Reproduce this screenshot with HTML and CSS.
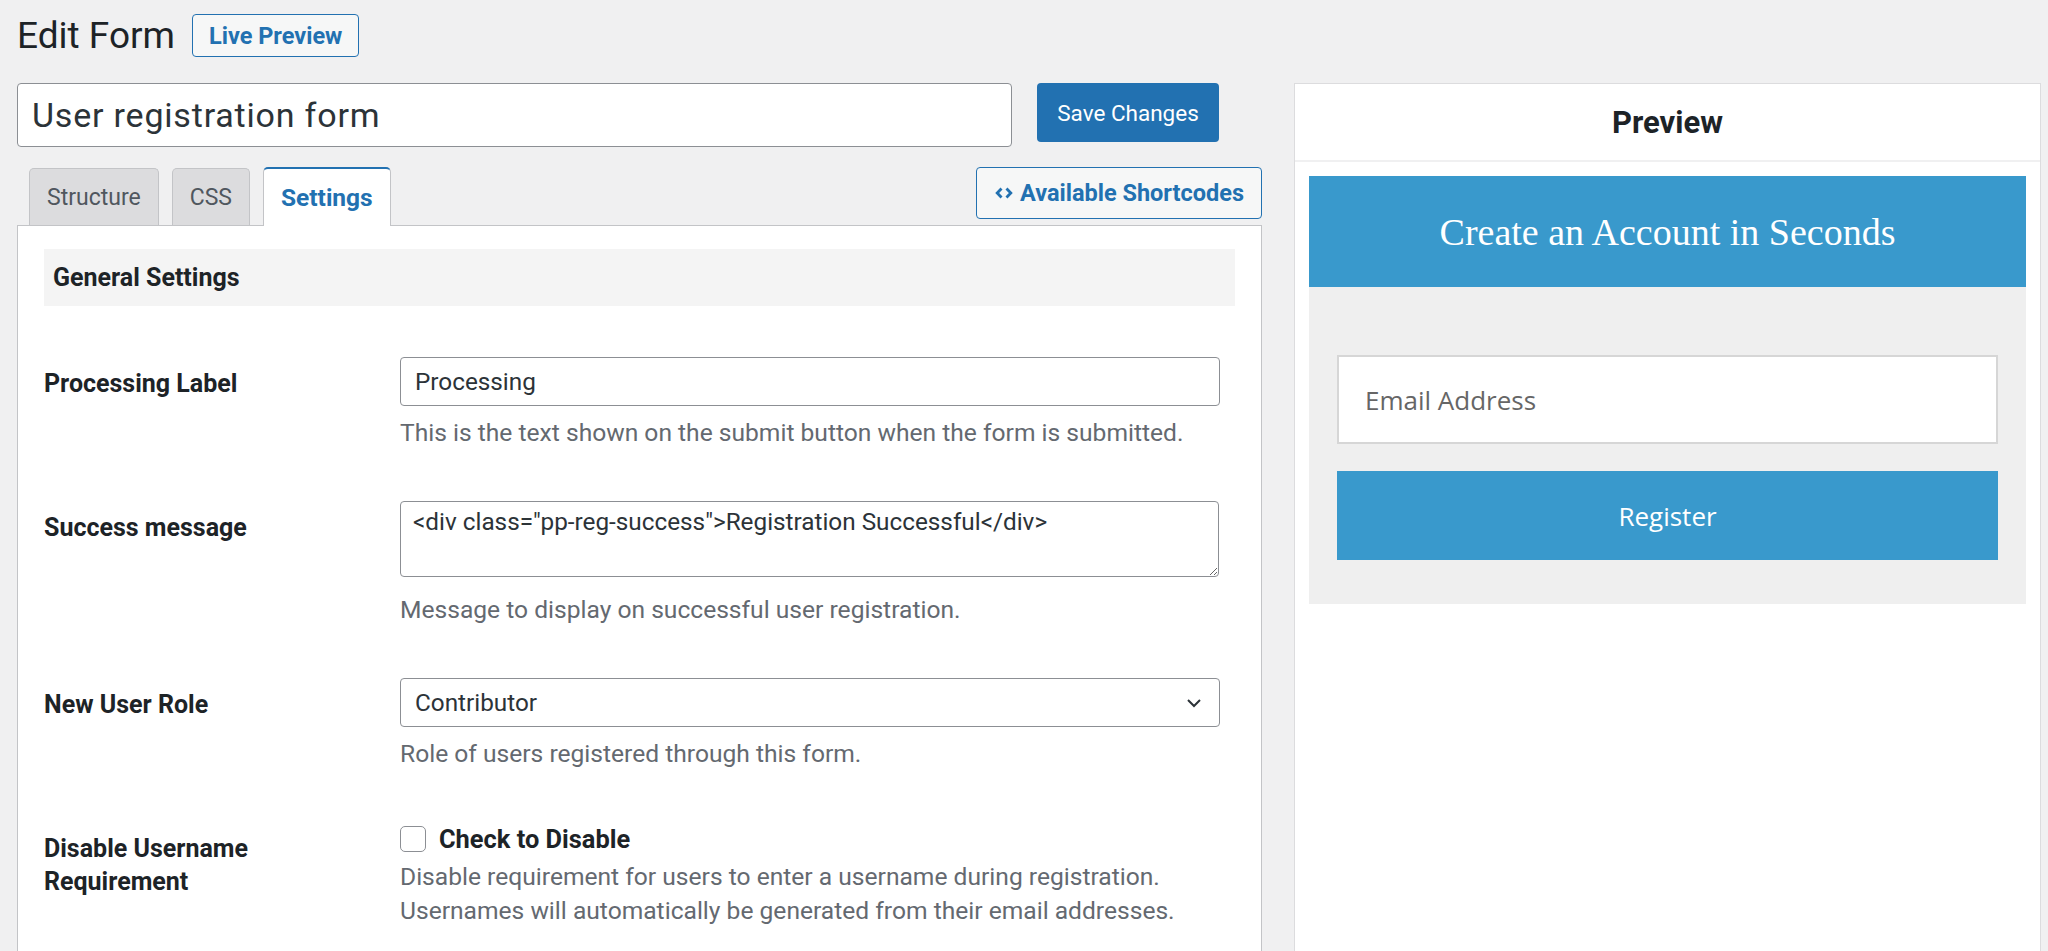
FILE: index.html
```html
<!DOCTYPE html>
<html lang="en">
<head>
  <meta charset="UTF-8">
  <meta name="viewport" content="width=device-width, initial-scale=1.0">
  <title>Edit Form</title>

  <link rel="stylesheet" href="styles.css">
</head>
<body>
  <div class="header">
    <h1>Edit Form</h1>
    <a class="btn-outline" href="#">Live Preview</a>
  </div>

  <div class="wrapper">
    <div class="editor">
      <div class="title-row">
        <input class="title-input" type="text" value="User registration form">
        <button class="btn-primary">Save Changes</button>
      </div>

      <div class="tabs-row">
        <div class="tabs">
          <span class="tab">Structure</span>
          <span class="tab">CSS</span>
          <span class="tab active">Settings</span>
        </div>
        <button class="btn-outline btn-shortcodes">
          <svg width="18" height="16" viewBox="0 0 18 16">
            <path d="M6.5 3.5 L2.2 8 L6.5 12.5 M11.5 3.5 L15.8 8 L11.5 12.5" fill="none" stroke="#2271b1" stroke-width="2.8"/>
          </svg>
          Available Shortcodes
        </button>
      </div>

      <div class="panel">
        <div class="section-title">General Settings</div>

        <div class="fields">
          <div class="field">
            <label class="label">Processing Label</label>
            <div class="control">
              <input class="text-input" type="text" value="Processing">
              <p class="description">This is the text shown on the submit button when the form is submitted.</p>
            </div>
          </div>

          <div class="field">
            <label class="label">Success message</label>
            <div class="control">
              <textarea class="text-area"><div class="pp-reg-success">Registration Successful</div></textarea>
              <p class="description after-area">Message to display on successful user registration.</p>
            </div>
          </div>

          <div class="field">
            <label class="label">New User Role</label>
            <div class="control">
              <div class="select">
                <span>Contributor</span>
                <svg width="18" height="18" viewBox="0 0 18 18">
                  <path d="M3 6 L9 12 L15 6" fill="none" stroke="#2c3338" stroke-width="2"/>
                </svg>
              </div>
              <p class="description">Role of users registered through this form.</p>
            </div>
          </div>

          <div class="field">
            <label class="label">Disable Username Requirement</label>
            <div class="control">
              <div class="check">
                <span class="check-box"></span>
                <span class="check-text">Check to Disable</span>
              </div>
              <p class="description after-check">Disable requirement for users to enter a username during registration.<br>Usernames will automatically be generated from their email addresses.</p>
            </div>
          </div>
        </div>
      </div>
    </div>

    <div class="preview">
      <div class="preview-head">Preview</div>
      <div class="preview-body">
        <div class="pp-banner">Create an Account in Seconds</div>
        <div class="pp-form">
          <div class="pp-email">Email Address</div>
          <div class="pp-register">Register</div>
        </div>
      </div>
    </div>
  </div>
</body>
</html>
```

FILE: styles.css
```css
body {
  margin: 0;
  background: #f0f0f1;
  font-family: Roboto, "Liberation Sans", sans-serif;
  color: #1d2327;
}

.header {
  display: flex;
  align-items: center;
  gap: 17px;
  padding: 14px 0 0 17px;
}

h1 {
  margin: 0;
  font-size: 37px;
  font-weight: 400;
  line-height: 43px;
}

.btn-outline {
  display: inline-flex;
  align-items: center;
  box-sizing: border-box;
  height: 43px;
  padding: 0 16px;
  border: 1px solid #2271b1;
  border-radius: 4px;
  background: #f6f7f7;
  color: #2271b1;
  font-family: inherit;
  font-size: 23.5px;
  font-weight: 700;
  text-decoration: none;
}

.wrapper {
  display: flex;
  gap: 32px;
  padding: 26px 7px 0 17px;
}

.editor {
  width: 1245px;
  flex-shrink: 0;
}

.title-row {
  display: flex;
  align-items: flex-start;
  gap: 25px;
}

.title-input {
  box-sizing: border-box;
  width: 995px;
  height: 64px;
  padding: 0 14px;
  border: 1px solid #8c8f94;
  border-radius: 4px;
  font-family: inherit;
  font-size: 34px;
  letter-spacing: 0.8px;
  color: #2c3338;
}

.btn-primary {
  width: 182px;
  height: 59px;
  border: 0;
  border-radius: 4px;
  background: #2271b1;
  color: #fff;
  font-family: inherit;
  font-size: 22.5px;
}

.tabs-row {
  display: flex;
  justify-content: space-between;
  align-items: flex-start;
  margin-top: 20px;
}

.tabs {
  display: flex;
  align-items: flex-end;
  gap: 13px;
  padding-left: 12px;
}

.tab {
  display: flex;
  align-items: center;
  box-sizing: border-box;
  height: 57px;
  padding: 0 17px;
  background: #dcdcde;
  border: 1px solid #c3c4c7;
  border-bottom: 0;
  border-radius: 5px 5px 0 0;
  color: #50575e;
  font-size: 23px;
}

.tab.active {
  position: relative;
  z-index: 2;
  height: 59px;
  margin-bottom: -1px;
  padding: 0 17px;
  background: #fff;
  border-top: 2px solid #2271b1;
  color: #2271b1;
  font-size: 24.5px;
  font-weight: 700;
}

.btn-shortcodes {
  height: 52px;
  padding: 0 17px 0 18px;
  gap: 7px;
  cursor: pointer;
}

.panel {
  min-height: 700px;
  padding: 23px 26px;
  background: #fff;
  border: 1px solid #c3c4c7;
}

.section-title {
  display: flex;
  align-items: center;
  height: 57px;
  padding-left: 9px;
  background: #f4f4f4;
  font-size: 25px;
  font-weight: 700;
}

.fields {
  display: flex;
  flex-direction: column;
  gap: 51px;
  margin-top: 51px;
}

.field {
  display: grid;
  grid-template-columns: 356px 1fr;
}

.label {
  padding: 10px 30px 0 0;
  font-size: 25px;
  font-weight: 700;
  line-height: 33px;
}

.text-input,
.select {
  box-sizing: border-box;
  width: 820px;
  height: 49px;
  padding: 0 14px;
  border: 1px solid #8c8f94;
  border-radius: 4px;
  background: #fff;
  font-family: inherit;
  font-size: 24.3px;
  color: #2c3338;
}

.text-area {
  display: block;
  box-sizing: border-box;
  width: 819px;
  height: 76px;
  padding: 3px 12px;
  border: 1px solid #8c8f94;
  border-radius: 4px;
  font-family: inherit;
  font-size: 24.3px;
  line-height: 34px;
  color: #2c3338;
}

.select {
  display: flex;
  align-items: center;
  justify-content: space-between;
  padding-right: 16px;
}

.description {
  margin: 10px 0 0;
  color: #646970;
  font-size: 24.6px;
  line-height: 34px;
}

.description.after-area {
  margin-top: 16px;
}

.description.after-check {
  margin-top: 4px;
}

.check {
  display: flex;
  align-items: center;
  gap: 13px;
  height: 34px;
}

.check-box {
  box-sizing: border-box;
  width: 26px;
  height: 26px;
  border: 1px solid #8c8f94;
  border-radius: 5px;
  background: #fff;
}

.check-text {
  font-size: 25.4px;
  font-weight: 700;
}

.preview {
  flex: 1;
  min-height: 900px;
  background: #fff;
  border: 1px solid #dcdcde;
}

.preview-head {
  display: flex;
  align-items: center;
  justify-content: center;
  height: 76px;
  border-bottom: 2px solid #f0f0f1;
  font-size: 31px;
  font-weight: 700;
}

.preview-body {
  padding: 14px;
}

.pp-banner {
  display: flex;
  align-items: center;
  justify-content: center;
  height: 111px;
  background: #3999cc;
  color: #fff;
  font-family: "Liberation Serif", serif;
  font-size: 38px;
}

.pp-form {
  padding: 68px 28px 44px;
  background: #efefef;
  font-family: "Open Sans", sans-serif;
  font-size: 26px;
}

.pp-email {
  display: flex;
  align-items: center;
  box-sizing: border-box;
  height: 89px;
  padding-left: 26px;
  background: #fff;
  border: 2px solid #d6d6d6;
  color: #666;
}

.pp-register {
  display: flex;
  align-items: center;
  justify-content: center;
  height: 89px;
  margin-top: 27px;
  background: #3999cc;
  color: #fff;
}
```
